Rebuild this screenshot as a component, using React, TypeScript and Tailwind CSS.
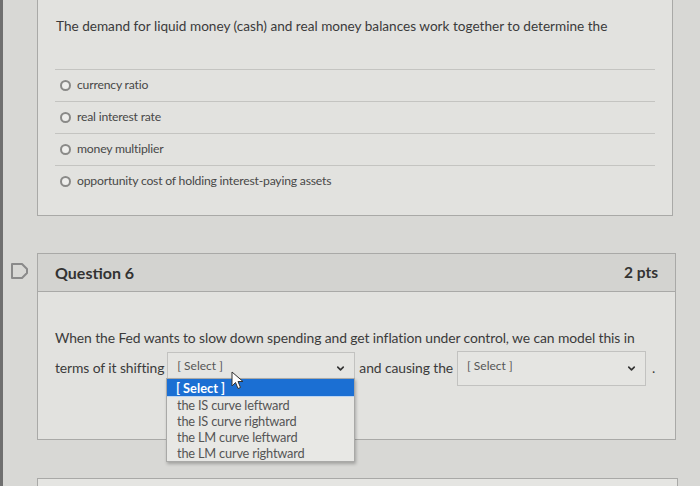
import { ChevronDown } from 'lucide-react'

const options = [
  'currency ratio',
  'real interest rate',
  'money multiplier',
  'opportunity cost of holding interest-paying assets',
]

const choices = [
  'the IS curve leftward',
  'the IS curve rightward',
  'the LM curve leftward',
  'the LM curve rightward',
]

function Flag() {
  return (
    <svg width="20" height="18" viewBox="0 0 20 18" className="mt-[9px] ml-[7px]">
      <path d="M2 2 H12 L17 7 V11 L12 16 H2 Z" fill="none" stroke="#8a8a8a" strokeWidth="2" strokeLinejoin="round" />
    </svg>
  )
}

function Cursor() {
  return (
    <svg width="14" height="20" viewBox="0 0 14 20" className="absolute left-[231px] top-[371px]">
      <path d="M1 1 L1 15 L4.5 11.5 L7 17.5 L9.5 16.5 L7 10.5 L12 10.5 Z" fill="#fff" stroke="#333" strokeWidth="1" strokeLinejoin="round" />
    </svg>
  )
}

export default function App() {
  return (
    <div className="relative w-[700px] h-[486px] overflow-hidden bg-[#d8d8d5] font-['Lato','Liberation_Sans',sans-serif] flex">
      {/* dark screen edge */}
      <div className="w-[3px] shrink-0 bg-[#6f6f6f]" />

      <div className="flex flex-col">
        {/* Question 5 (top cut off) */}
        <div className="flex">
          <div className="w-[34px] shrink-0" />
          <div className="w-[636px] h-[216px] border border-t-0 border-[#a9a9a7] bg-[#e2e2df] px-[17px] pt-[17px]">
            <p className="text-[13.6px] leading-[18px] text-[#3b3b3b] pl-[1px]">
              The demand for liquid money (cash) and real money balances work together to determine the
            </p>
            <div className="mt-[34px]">
              {options.map((o) => (
                <div key={o} className="h-[32px] border-t border-[#c4c4c1] flex items-center gap-[6px] pl-[5px]">
                  <span className="w-[11px] h-[11px] rounded-full border-[2px] border-[#8a8a88] bg-[#eeeeec]" />
                  <span className="text-[12.2px] text-[#484848] tracking-[-0.2px]">{o}</span>
                </div>
              ))}
            </div>
          </div>
        </div>

        {/* Question 6 */}
        <div className="flex mt-[37px]">
          <div className="w-[34px] shrink-0">
            <Flag />
          </div>
          <div className="w-[639px] h-[187px] border border-[#a9a9a7] bg-[#e2e2df]">
            <div className="h-[38px] bg-[#d3d3d0] border-b border-[#a9a9a7] flex items-center justify-between px-[17px]">
              <span className="text-[16px] font-bold text-[#333]">Question 6</span>
              <span className="text-[15.5px] font-bold text-[#333]">2 pts</span>
            </div>
            <div className="px-[17px] pt-[37px]">
              <p className="text-[13.9px] leading-[18px] text-[#3b3b3b] tracking-[-0.1px]">
                When the Fed wants to slow down spending and get inflation under control, we can model this in
              </p>
              <div className="flex items-center mt-[4px] text-[13.9px] text-[#3b3b3b]">
                <span className="tracking-[-0.1px]">terms of it shifting</span>
                <div className="ml-[3px] w-[188px] h-[34px] border border-[#c2c2c0] bg-[#e5e5e2] flex items-center justify-between pl-[9px] pr-[8px]">
                  <span className="text-[12px] text-[#555] -mt-[6px]">[ Select ]</span>
                  <ChevronDown className="w-[11px] h-[11px] text-[#333]" strokeWidth={3.5} />
                </div>
                <span className="ml-[4px] tracking-[-0.1px]">and causing the</span>
                <div className="ml-[4px] w-[189px] h-[35px] border border-[#c2c2c0] bg-[#e5e5e2] flex items-center justify-between pl-[9px] pr-[8px]">
                  <span className="text-[12px] text-[#555] -mt-[6px]">[ Select ]</span>
                  <ChevronDown className="w-[11px] h-[11px] text-[#333]" strokeWidth={3.5} />
                </div>
                <span className="ml-[6px]">.</span>
              </div>
            </div>
          </div>
        </div>

        {/* Question 7 (cut off) */}
        <div className="flex mt-[38px]">
          <div className="w-[34px] shrink-0" />
          <div className="w-[641px] h-[20px] border border-b-0 border-[#a9a9a7] bg-[#e5e5e2]" />
        </div>
      </div>

      {/* open dropdown list */}
      <div className="absolute left-[166px] top-[378px] w-[189px] bg-[#e8e8e5] border border-[#a9a9a7] shadow-[1px_2px_3px_rgba(0,0,0,0.25)] text-[12.8px] leading-[16px]">
        <div className="bg-[#1b6fd3] text-white font-bold px-[9px] h-[18px] flex items-center border-b border-white/70">[ Select ]</div>
        {choices.map((c) => (
          <div key={c} className="px-[10px] h-[16px] flex items-center text-[#555] tracking-[-0.2px]">{c}</div>
        ))}
      </div>

      <Cursor />
    </div>
  )
}
